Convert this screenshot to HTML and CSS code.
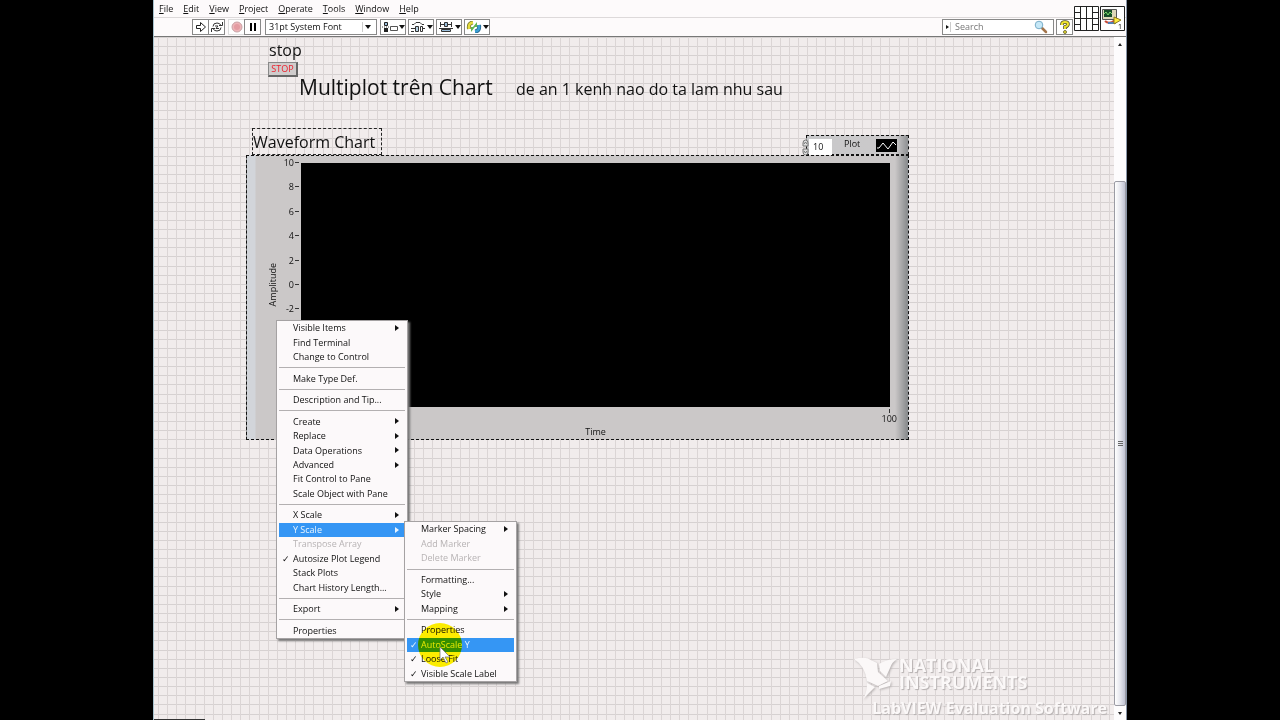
FILE: index.html
```
<!DOCTYPE html>
<html lang="en">
<head>
    <meta charset="UTF-8">
    <meta name="viewport" content="width=device-width, initial-scale=1.0">
    <title>Waveform Chart Front Panel</title>
    <link rel="stylesheet" href="styles.css">
</head>
<body>
    <div class="window">
        <header class="topbar">
            <nav class="menubar">
                <button><u>F</u>ile</button>
                <button><u>E</u>dit</button>
                <button><u>V</u>iew</button>
                <button><u>P</u>roject</button>
                <button><u>O</u>perate</button>
                <button><u>T</u>ools</button>
                <button><u>W</u>indow</button>
                <button><u>H</u>elp</button>
            </nav>

            <div class="toolbar">
                <button class="tool" aria-label="Run">
                    <svg width="12" height="12" viewBox="0 0 12 12"><path d="M1.5 4.5h4V1.5L10.500 6 5.500 10.500v-3h-4z" fill="#fff" stroke="#222"/></svg>
                </button>
                <button class="tool" aria-label="Run continuously">
                    <svg width="12" height="12" viewBox="0 0 12 12" fill="none" stroke="#333"><path d="M2 5.500Q2 2 6 2q3 0 4 2.500M10 6.500Q10 10 6 10q-3 0-4-2.500"/><path d="M8 4.500h3.500V1M4 7.500H.5V11M4 5h3L5 7.500h3"/></svg>
                </button>
                <button class="tool abort" aria-label="Abort">
                    <svg width="12" height="12" viewBox="0 0 12 12"><circle cx="6" cy="6" r="5" fill="#eeb4b8" stroke="#c9a3a6"/><circle cx="6" cy="6" r="3" fill="#e49ca2"/></svg>
                </button>
                <button class="tool" aria-label="Pause">
                    <svg width="12" height="12" viewBox="0 0 12 12"><path d="M3 2h2v8H3zM7 2h2v8H7z"/></svg>
                </button>
                <span class="font-box">
                    <select class="font-select" aria-label="Font">
                        <option>31pt System Font</option>
                    </select>
                </span>
                <button class="tool wide" aria-label="Align objects">
                    <svg width="17" height="12" viewBox="0 0 17 12"><path d="M2.500 1.500h3v3h-3z" fill="#9cc0dc" stroke="#222"/><path d="M2 7h4v4H2z" fill="#222"/><path d="M0 6h7" stroke="#444" stroke-dasharray="1 1"/><path d="M8.500 5.500h7v4h-7z" fill="#fff" stroke="#555"/></svg>
                    <i></i>
                </button>
                <button class="tool wide" aria-label="Distribute objects">
                    <svg width="17" height="12" viewBox="0 0 17 12" stroke="#333"><path d="M2 3.500h2l2-2h4l2 2h2M1 7.500h4M12 7.500h3M1 10.500h3" fill="none"/><path d="M5.500 5.500h3v5h-3z" fill="#b9d4e5"/><path d="M10.500 5.500h2v5h-2z" fill="#fff"/></svg>
                    <i></i>
                </button>
                <button class="tool wide" aria-label="Resize objects">
                    <svg width="17" height="12" viewBox="0 0 17 12" stroke="#333"><path d="M2.500 1v5M13.500 1v5M3 3.500h3M10 3.500h3M1 7.500h14" fill="none"/><path d="M6.500 1.500h3v4h-3zM3.500 8.500h9v2h-9z" fill="#9cc0dc"/></svg>
                    <i></i>
                </button>
                <button class="tool wide" aria-label="Reorder">
                    <svg width="17" height="12" viewBox="0 0 17 12" fill="none"><path d="M7 1.500Q2 2 3 8" stroke="#77782a" stroke-width="4"/><path d="M7 1.500Q2 2 3 8" stroke="#e6dc3e" stroke-width="2.500"/><path d="M9 10.500q5-.5 4-6.500" stroke="#24658f" stroke-width="4"/><path d="M9 10.500q5-.5 4-6.500" stroke="#3aa0d4" stroke-width="2.500"/><path d="M7 6l4-5v5zM9 6l-4 5V6z" fill="#62b551"/></svg>
                    <i></i>
                </button>

                <label class="search">
                    <span class="search-arrow"></span>
                    <input type="text" placeholder="Search" aria-label="Search">
                    <svg width="14" height="14" viewBox="0 0 14 14"><path d="M8 8l4 4" stroke="#a3754c" stroke-width="2.500" stroke-linecap="round"/><circle cx="5" cy="5" r="3.800" fill="#c6e8f7" stroke="#78adc8"/></svg>
                </label>
                <button class="tool help" aria-label="Context help">
                    <svg width="12" height="14" viewBox="0 0 12 14"><path d="M3 5V4q0-2 3-2t3 2q0 2-3 3v2" fill="none" stroke="#555026" stroke-width="3.600"/><path d="M3 5V4q0-2 3-2t3 2q0 2-3 3v2" fill="none" stroke="#f1e62f" stroke-width="2"/><circle cx="6" cy="12" r="1.500" fill="#f1e62f" stroke="#555026" stroke-width=".8"/></svg>
                </button>
            </div>

            <div class="vi-icons">
                <svg width="25" height="25" viewBox="0 0 25 25" fill="#fff" stroke="#222"><path d="M.5.5h24v24H.5zM6.500.5v24M12.500.5v24M18.500.5v24M.5 6.500h6M.5 12.500h24M.5 18.500h6M18.500 6.500h6M18.500 18.500h6"/></svg>
                <svg width="25" height="25" viewBox="0 0 25 25"><path d="M.5.5h24v24H.5z" fill="#fff" stroke="#222"/><path d="M2.500 3.500h14v10h-14z" fill="#ddd8b8" stroke="#555"/><path d="M4 4h8v7H4z" fill="#174c27"/><path d="M4 8l2-2 2 3 2-3 2 2" fill="none" stroke="#7ddf6b"/><path d="M5 15q4 4 10-1" fill="none" stroke="#c74c3a" stroke-width="2"/><path d="M8 17h8" stroke="#537fb6" stroke-width="2"/><path d="M14 11l7 3-7 4z" fill="#ffec3b" stroke="#8d7c1c"/><text x="18" y="23" class="vi-number">1</text></svg>
            </div>
        </header>

        <main class="workspace">
            <div class="panel">
                <label class="stop-label" for="stop">stop</label>
                <button class="stop" id="stop">STOP</button>
                <h1 class="heading">Multiplot trên Chart</h1>
                <p class="note">de an 1 kenh nao do ta lam nhu sau</p>

                <h2 class="chart-title">Waveform Chart</h2>
                <div class="legend">
                    <svg class="spinner" width="7" height="17" viewBox="0 0 7 17" fill="#ddd" stroke="#777"><path d="M1 7V4q0-3 2.500-3T6 4v3zM1 10v3q0 3 2.500 3T6 13v-3z"/><path d="M2 5l1.500-2L5 5M2 12l1.500 2L5 12" fill="none"/></svg>
                    <input type="text" value="10" aria-label="Plot index">
                    <span>Plot</span>
                    <svg width="21" height="13" viewBox="0 0 21 13"><path d="M0 0h21v13H0z"/><path d="M1 9h2l4-5 5 6 5-7 3 3" fill="none" stroke="#fff"/></svg>
                </div>

                <section class="chart">
                    <span class="y-name">Amplitude</span>
                    <ol class="y-scale">
                        <li>10</li><li>8</li><li>6</li><li>4</li><li>2</li><li>0</li>
                        <li>-2</li><li>-4</li><li>-6</li><li>-8</li><li>-10</li>
                    </ol>
                    <div class="plot"></div>
                    <ol class="x-scale"><li>100</li></ol>
                    <span class="x-name">Time</span>
                </section>

                <div class="watermark">
                    <svg width="46" height="44" viewBox="0 0 46 44"><path d="M1 2q12-3 17 1l6 3 1 9 10 9-10 5-11-5Q12 9 1 2zM26 7q8-5 18-5-5 3-7 9l-4 9-6-6zM26 29l12-5-1 5-11 3zM14 26l8 4-12 12q4-6 4-16z"/></svg>
                    <p class="brand">NATIONAL<br>INSTRUMENTS</p>
                    <p class="edition">LabVIEW<sup>™</sup>Evaluation Software</p>
                </div>
            </div>

            <div class="scrollbar">
                <button class="up" aria-label="Scroll up"></button>
                <div class="track"><div class="thumb"></div></div>
                <button class="down" aria-label="Scroll down"></button>
            </div>
        </main>
        <div class="h-edge"></div>

        <!-- Chart shortcut menu -->
        <div class="popup chart-menu" role="menu">
            <button class="more">Visible Items</button>
            <button>Find Terminal</button>
            <button>Change to Control</button>
            <hr>
            <button>Make Type Def.</button>
            <hr>
            <button>Description and Tip...</button>
            <hr>
            <button class="more">Create</button>
            <button class="more">Replace</button>
            <button class="more">Data Operations</button>
            <button class="more">Advanced</button>
            <button>Fit Control to Pane</button>
            <button>Scale Object with Pane</button>
            <hr>
            <button class="more">X Scale</button>
            <button class="more active">Y Scale</button>
            <button disabled>Transpose Array</button>
            <button class="checked">Autosize Plot Legend</button>
            <button>Stack Plots</button>
            <button>Chart History Length...</button>
            <hr>
            <button class="more">Export</button>
            <hr>
            <button>Properties</button>
        </div>

        <!-- Y Scale submenu -->
        <div class="popup scale-menu" role="menu">
            <button class="more">Marker Spacing</button>
            <button disabled>Add Marker</button>
            <button disabled>Delete Marker</button>
            <hr>
            <button>Formatting...</button>
            <button class="more">Style</button>
            <button class="more">Mapping</button>
            <hr>
            <button>Properties</button>
            <button class="checked active">AutoScale Y</button>
            <button class="checked">Loose Fit</button>
            <button class="checked">Visible Scale Label</button>
        </div>

        <div class="click-spot"></div>
        <svg class="cursor" width="13" height="18" viewBox="0 0 13 18"><path d="M1 1v13l3-3 3 6 2-1-3-5h5z" fill="#fff" stroke="#777" stroke-width=".8"/></svg>
    </div>
</body>
</html>
```
FILE: styles.css
```
* {
    box-sizing: border-box;
}

body {
    margin: 0;
    padding: 0 153px;
    background: #000;
    color: #111;
    font-family: "Open Sans", "Noto Sans", sans-serif;
    font-size: 9px;
    overflow: hidden;
}

button, input, select {
    font: inherit;
    color: inherit;
    margin: 0;
    padding: 0;
    border: none;
    background: none;
}

h1, h2, p, ol {
    margin: 0;
    padding: 0;
    font-weight: normal;
    list-style: none;
}

.window {
    position: relative;
    display: flex;
    flex-direction: column;
    height: 100vh;
    border-right: 1px solid #8793a5;
    border-left: 1px solid #a8c3ce;
    background: #fdfafb;
}

/* menu bar and toolbar */
.topbar {
    position: relative;
    height: 37px;
    border-bottom: 1px solid #777;
}

.menubar {
    display: flex;
    gap: 10px;
    height: 18px;
    padding-left: 5px;
    border-bottom: 1px solid #ddd9da;
    line-height: 16px;
}

.toolbar {
    display: flex;
    align-items: center;
    height: 18px;
    padding: 0 53px 0 38px;
}

.tool {
    display: flex;
    align-items: center;
    justify-content: center;
    width: 17px;
    height: 16px;
    border: 1px solid #888;
    background: #fff;
}

.tool + .tool {
    margin-left: -1px;
}

.tool.abort {
    margin-left: 3px;
    border-color: #ddd;
}

.tool.wide,
.tool.wide + .tool.wide {
    width: 26px;
    margin-left: 2px;
}

.tool i {
    border: 3px solid transparent;
    border-top: 4px solid #111;
    border-bottom: none;
}

.font-box {
    position: relative;
    width: 112px;
    height: 16px;
    margin: 0 1px 0 4px;
    border: 1px solid #888;
    background: #fff;
}

.font-select {
    display: block;
    width: 100%;
    height: 14px;
    padding-left: 3px;
    appearance: none;
    line-height: 14px;
}

.font-box::after {
    content: "";
    position: absolute;
    top: 5px;
    right: 5px;
    border: 3px solid transparent;
    border-top: 4px solid #111;
    border-bottom: none;
    pointer-events: none;
}

.font-box::before {
    content: "";
    position: absolute;
    top: 2px;
    right: 13px;
    height: 10px;
    border-left: 1px solid #ccc;
}

.search {
    display: flex;
    align-items: center;
    width: 112px;
    height: 16px;
    margin-left: auto;
    padding: 0 5px 0 3px;
    border: 1px solid #888;
    background: #fff;
}

.search input {
    flex: 1;
    min-width: 0;
    margin-left: 1px;
    padding-left: 4px;
    border-left: 1px solid #ccc;
    line-height: 10px;
    outline: none;
}

.search input::placeholder {
    color: #777;
}

.search-arrow {
    border: 2px solid transparent;
    border-left: 3px solid #111;
    border-right: none;
}

.tool.help {
    margin-left: 2px;
}

.vi-icons {
    position: absolute;
    top: 6px;
    right: 1px;
    display: flex;
    gap: 1px;
}

.vi-number {
    font-size: 7px;
}

/* front panel */
.workspace {
    display: flex;
    flex: 1;
    min-height: 0;
}

.panel {
    position: relative;
    flex: 1;
    overflow: hidden;
    background-color: #f1ecec;
    background-image:
        repeating-linear-gradient(90deg, #dbd5d5 0 1px, transparent 1px calc(100% / 7)),
        repeating-linear-gradient(180deg, #d6d1d1 0 1px, transparent 1px calc(100% / 7));
    background-size: 64px 64px;
    background-position: 4px 0;
}

.stop-label {
    position: absolute;
    left: 115px;
    top: 2px;
    font-size: 16px;
    line-height: 22px;
}

.stop {
    position: absolute;
    left: 114px;
    top: 25px;
    width: 30px;
    height: 15px;
    border: 1px solid #888;
    border-right: 2px solid #666;
    border-bottom: 2px solid #666;
    background: #cfcccc;
    color: #ee1c2a;
    line-height: 12px;
}

.heading {
    position: absolute;
    left: 145px;
    top: 35px;
    font-size: 21px;
    line-height: 30px;
    white-space: nowrap;
}

.note {
    position: absolute;
    left: 362px;
    top: 40px;
    font-size: 16px;
    line-height: 24px;
    white-space: nowrap;
}

.chart-title {
    position: absolute;
    left: 98px;
    top: 91px;
    width: 130px;
    height: 27px;
    border: 1px dashed #222;
    font-size: 16px;
    line-height: 27px;
    white-space: nowrap;
}

.legend {
    position: absolute;
    left: 652px;
    top: 98px;
    display: flex;
    align-items: center;
    width: 103px;
    height: 20px;
    border: 1px dashed #111;
    background: linear-gradient(90deg, #c8c8ca, #cbc9ca 88%, #8e9092);
}

.legend .spinner {
    margin: 5px 0 0 -5px;
}

.legend input {
    width: 23px;
    height: 16px;
    margin-top: 3px;
    padding-left: 4px;
    background: #fff;
}

.legend span {
    width: 44px;
    padding-left: 12px;
    line-height: 16px;
    margin-bottom: 2px;
}

.chart {
    position: absolute;
    left: 92px;
    top: 118px;
    display: grid;
    grid-template: 7px 244px 19px 12px / 20px 34px 1fr;
    width: 663px;
    height: 285px;
    padding-right: 18px;
    border: 1px dashed #111;
    background: linear-gradient(90deg, #d2d5da 0 8px, #cbc8c8 9px calc(100% - 13px), #85888a);
}

.y-name {
    grid-area: 2 / 1;
    align-self: center;
    justify-self: end;
    writing-mode: vertical-rl;
    transform: rotate(180deg);
    line-height: 12px;
    margin-right: -12px;
}

.y-scale {
    grid-area: 2 / 2;
    display: flex;
    flex-direction: column;
    justify-content: space-between;
    margin: -6px 0;
    line-height: 12px;
    text-align: right;
}

.y-scale li::after {
    content: "";
    display: inline-block;
    width: 4px;
    height: 1px;
    margin: 0 2px 3px 1px;
    background: #333;
}

.plot {
    grid-area: 2 / 3;
    background: #000;
}

.x-scale {
    grid-area: 3 / 3;
    display: flex;
    justify-content: flex-end;
    margin-right: -7px;
    line-height: 12px;
    text-align: center;
}

.x-scale li::before {
    content: "";
    display: block;
    width: 1px;
    height: 4px;
    margin: 2px auto 0;
    background: #333;
}

.x-name {
    grid-area: 4 / 3;
    justify-self: center;
    line-height: 12px;
}

.watermark {
    position: absolute;
    right: 7px;
    bottom: 1px;
    display: grid;
    grid-template-columns: 46px 1fr;
    width: 254px;
    color: #fbf8f8;
    font-weight: bold;
    text-shadow: 1px 1px 1px #b5b0b0;
}

.watermark svg {
    fill: #fbf8f8;
    filter: drop-shadow(1px 1px 1px #b5b0b0);
}

.watermark p {
    font-weight: inherit;
}

.brand {
    font-size: 18px;
    line-height: 17px;
}

.edition {
    grid-column: 1 / 3;
    margin-top: -4px;
    font-size: 16px;
    line-height: 22px;
    text-align: right;
    white-space: nowrap;
}

.edition sup {
    font-size: 6px;
    line-height: 6px;
}

/* scrollbar */
.scrollbar {
    display: flex;
    flex-direction: column;
    width: 12px;
    background: #fdfcfd;
}

.scrollbar button {
    height: 14px;
}

.scrollbar button::before {
    content: "";
    display: block;
    width: 0;
    margin: 0 auto;
    border: 2px solid transparent;
}

.scrollbar .up::before {
    border-bottom: 3px solid #222;
    border-top: none;
}

.scrollbar .down::before {
    border-top: 3px solid #222;
    border-bottom: none;
}

.track {
    flex: 1;
    padding-top: 130px;
}

.thumb {
    display: grid;
    place-items: center;
    height: 100%;
    border: 1px solid #9b9ba4;
    border-radius: 2px;
    background: linear-gradient(90deg, #fff, #e6e7ee 50%, #bfc2d2);
}

.thumb::before {
    content: "";
    width: 5px;
    height: 5px;
    background: repeating-linear-gradient(#666 0 1px, transparent 1px 2px);
}

.h-edge {
    position: absolute;
    left: 0;
    bottom: 0;
    width: 51px;
    height: 1px;
    background: #333;
}

/* shortcut menus */
.popup {
    position: absolute;
    display: flex;
    flex-direction: column;
    padding: 0 2px;
    border: 1px solid #a5a2a3;
    background: #fcf9fa;
    box-shadow: 2px 2px 2px #777;
}

.popup button {
    position: relative;
    flex: 1;
    padding-left: 14px;
    line-height: 14px;
    text-align: left;
    white-space: nowrap;
}

.popup button:disabled {
    color: #b7b3b4;
}

.popup .active {
    background: #3596f4;
    color: #e9f5ff;
}

.popup hr {
    width: 100%;
    height: 1px;
    margin: 3px 0;
    border: none;
    background: #b3b0b1;
}

.more::after {
    content: "";
    position: absolute;
    top: 4px;
    right: 6px;
    border: 3px solid transparent;
    border-left: 4px solid currentColor;
    border-right: none;
}

.checked::before {
    content: "✓";
    position: absolute;
    left: 3px;
    font-family: "DejaVu Sans", sans-serif;
    font-weight: bold;
}

.chart-menu {
    left: 122px;
    top: 320px;
    width: 132px;
    height: 319px;
}

.scale-menu {
    left: 250px;
    top: 521px;
    width: 113px;
    height: 161px;
}

.click-spot {
    position: absolute;
    left: 264px;
    top: 623px;
    width: 44px;
    height: 44px;
    border-radius: 50%;
    background: #fff200;
    mix-blend-mode: multiply;
    pointer-events: none;
}

.cursor {
    position: absolute;
    left: 285px;
    top: 646px;
    pointer-events: none;
}
```
